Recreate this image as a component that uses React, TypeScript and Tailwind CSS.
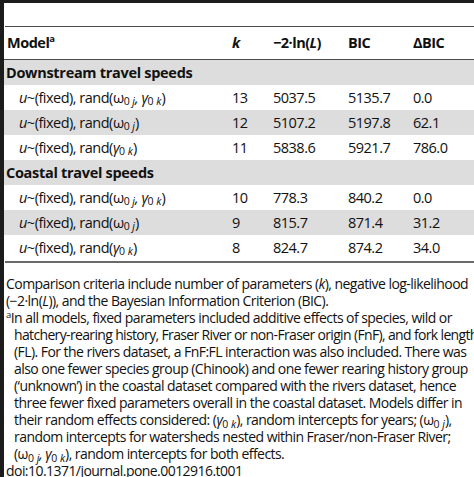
const Omega = () => (
  <>
    ω<sub className="text-[10.5px] tracking-normal">0 <i>j</i></sub>
  </>
);

const Gamma = () => (
  <>
    <i>γ</i>
    <sub className="text-[10.5px] tracking-normal">0 <i>k</i></sub>
  </>
);

const Expr = ({ kind }: { kind: "both" | "omega" | "gamma" }) => (
  <span>
    <i>u</i>~(fixed), rand(
    {kind === "both" && (
      <>
        <Omega />
        <i>,</i> <Gamma />
      </>
    )}
    {kind === "omega" && <Omega />}
    {kind === "gamma" && <Gamma />})
  </span>
);

type Row = { kind: "both" | "omega" | "gamma"; k: string; ll: string; bic: string; d: string };

const SECTIONS: { title: string; rows: Row[] }[] = [
  {
    title: "Downstream travel speeds",
    rows: [
      { kind: "both", k: "13", ll: "5037.5", bic: "5135.7", d: "0.0" },
      { kind: "omega", k: "12", ll: "5107.2", bic: "5197.8", d: "62.1" },
      { kind: "gamma", k: "11", ll: "5838.6", bic: "5921.7", d: "786.0" },
    ],
  },
  {
    title: "Coastal travel speeds",
    rows: [
      { kind: "both", k: "10", ll: "778.3", bic: "840.2", d: "0.0" },
      { kind: "omega", k: "9", ll: "815.7", bic: "871.4", d: "31.2" },
      { kind: "gamma", k: "8", ll: "824.7", bic: "874.2", d: "34.0" },
    ],
  },
];

const COLS = "grid grid-cols-[228px_41px_75px_65px_1fr] items-center";

export default function App() {
  return (
    <div
      className="w-[474px] h-[477px] overflow-hidden bg-white text-[#111] border-l-4 border-t-[3px] border-[#1c1c1c] text-[14px] tracking-[-0.5px]"
      style={{ fontFamily: "'Open Sans', 'Noto Sans', sans-serif" }}
    >
      <div className="h-[23px]" />
      {/* table */}
      <div className="border-t border-[#4a4a4a] ml-[1px]">
        <div className={`${COLS} h-[33px] font-bold border-b border-[#4a4a4a] -ml-[1px] text-[14.5px]`}>
          <div className="pl-[3px]">
            Model<sup className="text-[9.5px] -top-[6px] font-bold">a</sup>
          </div>
          <div>
            <i>k</i>
          </div>
          <div>
            −2·ln(<i>L</i>)
          </div>
          <div>BIC</div>
          <div>ΔBIC</div>
        </div>
        {SECTIONS.map((sec) => (
          <div key={sec.title} className="-ml-[1px]">
            <div className="h-[25px] flex items-center bg-[#dddddd] font-bold pl-[2px] text-[14.5px] tracking-[-0.3px]">
              {sec.title}
            </div>
            {sec.rows.map((r, i) => (
              <div
                key={i}
                className={`${COLS} h-[25px] text-[14.5px] ${i === 1 ? "bg-[#dddddd]" : "bg-white"}`}
              >
                <div className="pl-[15px]">
                  <Expr kind={r.kind} />
                </div>
                <div>{r.k}</div>
                <div>{r.ll}</div>
                <div>{r.bic}</div>
                <div>{r.d}</div>
              </div>
            ))}
          </div>
        ))}
        <div className="border-t-2 border-[#6a6a6a] mt-[1px]" />
      </div>

      {/* footnotes */}
      <div className="mt-[12px] pl-[2px] leading-[17px] whitespace-nowrap tracking-[-0.55px]">
        <div>
          Comparison criteria include number of parameters (<i>k</i>), negative log-likelihood
        </div>
        <div>
          (−2·ln(<i>L</i>)), and the Bayesian Information Criterion (BIC).
        </div>
        <div>
          <sup className="text-[9.5px] -top-[5px]">a</sup>In all models, fixed parameters included additive effects of species, wild or
        </div>
        <div className="pl-[8px]">
          <div className="tracking-[-0.65px]">
            hatchery-rearing history, Fraser River or non-Fraser origin (FnF), and fork length
          </div>
          <div>(FL). For the rivers dataset, a FnF:FL interaction was also included. There was</div>
          <div>also one fewer species group (Chinook) and one fewer rearing history group</div>
          <div>(‘unknown’) in the coastal dataset compared with the rivers dataset, hence</div>
          <div>three fewer fixed parameters overall in the coastal dataset. Models differ in</div>
          <div>
            their random effects considered: (<Gamma />), random intercepts for years; (<Omega />),
          </div>
          <div>random intercepts for watersheds nested within Fraser/non-Fraser River;</div>
          <div>
            (<Omega />
            <i>,</i> <Gamma />), random intercepts for both effects.
          </div>
        </div>
        <div>doi:10.1371/journal.pone.0012916.t001</div>
      </div>
    </div>
  );
}
